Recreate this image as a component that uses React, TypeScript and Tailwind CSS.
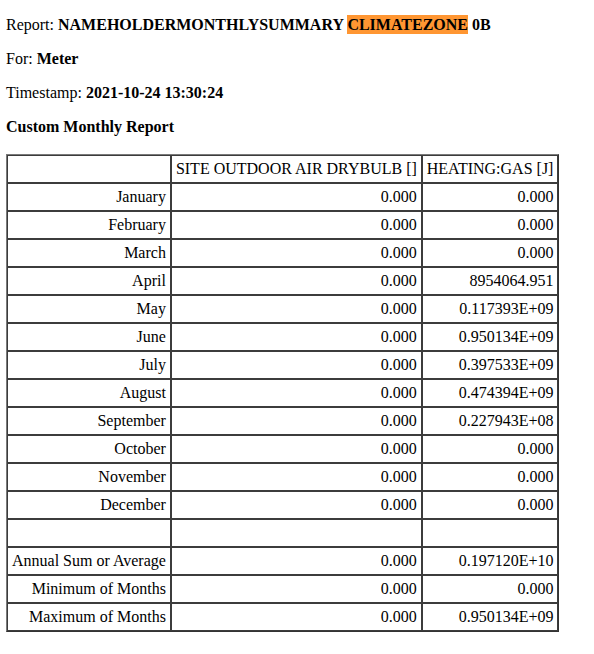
const rows: [string, string, string][] = [
  ["January", "0.000", "0.000"],
  ["February", "0.000", "0.000"],
  ["March", "0.000", "0.000"],
  ["April", "0.000", "8954064.951"],
  ["May", "0.000", "0.117393E+09"],
  ["June", "0.000", "0.950134E+09"],
  ["July", "0.000", "0.397533E+09"],
  ["August", "0.000", "0.474394E+09"],
  ["September", "0.000", "0.227943E+08"],
  ["October", "0.000", "0.000"],
  ["November", "0.000", "0.000"],
  ["December", "0.000", "0.000"],
  ["", "", ""],
  ["Annual Sum or Average", "0.000", "0.197120E+10"],
  ["Minimum of Months", "0.000", "0.000"],
  ["Maximum of Months", "0.000", "0.950134E+09"],
];

const cell = "border border-[#3c3c3c] px-[4px] py-[4px] h-[28px] leading-[18px] whitespace-nowrap";

export default function App() {
  return (
    <div className="min-h-screen bg-white text-black px-[6px] pt-[16px] text-[16px] leading-[18px] font-['Liberation_Serif','Times_New_Roman',serif]">
      <p className="mb-[16px]">
        Report: <b>NAMEHOLDERMONTHLYSUMMARY <span className="bg-[#ff9632] py-[1px]">CLIMATEZONE</span> 0B</b>
      </p>
      <p className="mb-[16px]">
        For: <b>Meter</b>
      </p>
      <p className="mb-[16px]">
        Timestamp: <b>2021-10-24 13:30:24</b>
      </p>
      <b className="block">Custom Monthly Report</b>
      <div className="h-[18px]" />
      <table className="border-separate border-spacing-0 border border-t-[#7a7a7a] border-l-[#7a7a7a] border-b-[#333] border-r-[#333]">
        <tbody>
          <tr>
            <td className={cell}></td>
            <td className={cell + " text-left"}>SITE OUTDOOR AIR DRYBULB []</td>
            <td className={cell + " text-left"}>HEATING:GAS [J]</td>
          </tr>
          {rows.map((r, i) => (
            <tr key={i}>
              <td className={cell + " text-right"}>{r[0]}</td>
              <td className={cell + " text-right"}>{r[1]}</td>
              <td className={cell + " text-right"}>{r[2]}</td>
            </tr>
          ))}
        </tbody>
      </table>
    </div>
  );
}
